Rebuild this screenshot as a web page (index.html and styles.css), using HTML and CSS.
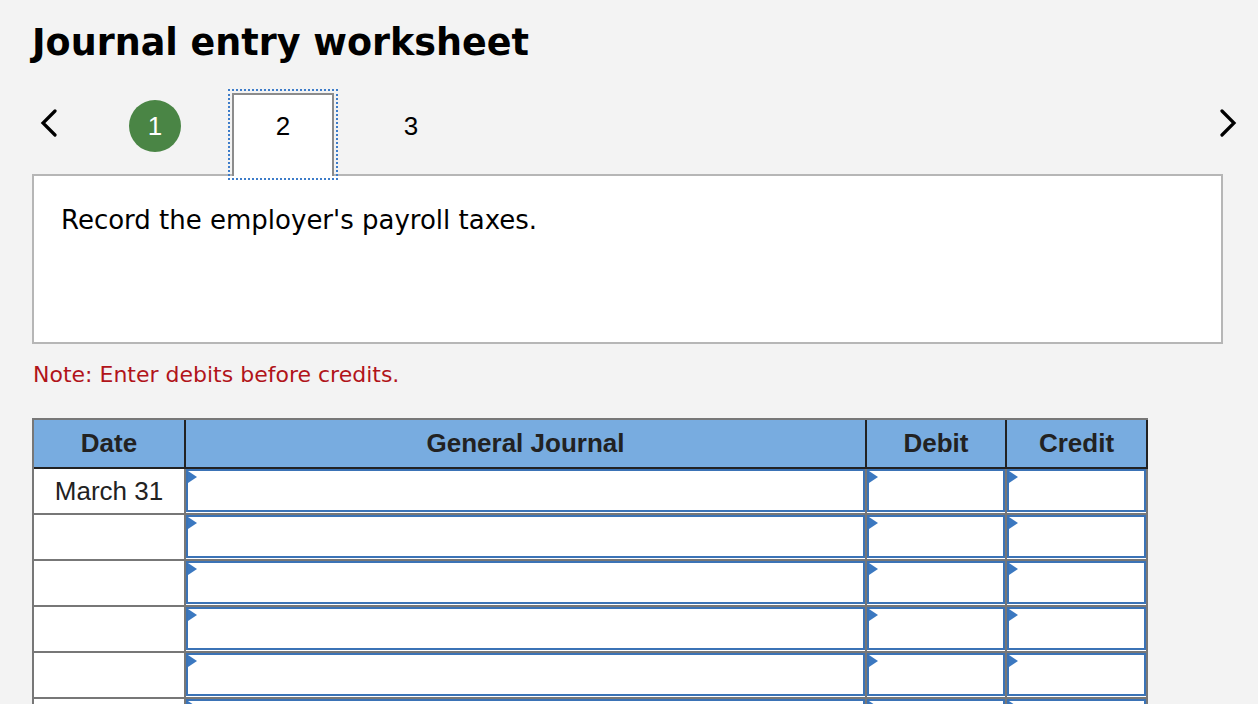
FILE: index.html
```html
<!DOCTYPE html>
<html lang="en">
<head>
<meta charset="utf-8">
<title>Journal entry worksheet</title>
<link rel="stylesheet" href="styles.css">
</head>
<body>
<div class="page">
  <h1 class="title">Journal entry worksheet</h1>

  <nav class="nav">
    <button class="chev chev-prev" aria-label="Previous">
      <svg width="18" height="28" viewBox="0 0 18 28"><polyline points="15,2 3,14 15,26" fill="none" stroke="#000" stroke-width="3.2" stroke-linecap="round" stroke-linejoin="miter"/></svg>
    </button>
    <div class="steps">
      <div class="step step-done"><span class="dot">1</span></div>
      <div class="step step-current"><span>2</span></div>
      <div class="step"><span>3</span></div>
    </div>
    <button class="chev chev-next" aria-label="Next">
      <svg width="18" height="28" viewBox="0 0 18 28"><polyline points="3,2 15,14 3,26" fill="none" stroke="#000" stroke-width="3.2" stroke-linecap="round" stroke-linejoin="miter"/></svg>
    </button>
  </nav>

  <div class="prompt">Record the employer's payroll taxes.</div>

  <p class="note">Note: Enter debits before credits.</p>

  <table class="journal">
    <thead>
      <tr class="head">
        <th class="c-date">Date</th>
        <th class="c-gj">General Journal</th>
        <th class="c-amt">Debit</th>
        <th class="c-cr">Credit</th>
      </tr>
    </thead>
    <tbody>
      <tr>
        <td class="date">March 31</td>
        <td class="entry"><div class="field"><input type="text"></div></td>
        <td class="entry"><div class="field"><input type="text"></div></td>
        <td class="entry"><div class="field"><input type="text"></div></td>
      </tr>
      <tr>
        <td class="date"></td>
        <td class="entry"><div class="field"><input type="text"></div></td>
        <td class="entry"><div class="field"><input type="text"></div></td>
        <td class="entry"><div class="field"><input type="text"></div></td>
      </tr>
      <tr>
        <td class="date"></td>
        <td class="entry"><div class="field"><input type="text"></div></td>
        <td class="entry"><div class="field"><input type="text"></div></td>
        <td class="entry"><div class="field"><input type="text"></div></td>
      </tr>
      <tr>
        <td class="date"></td>
        <td class="entry"><div class="field"><input type="text"></div></td>
        <td class="entry"><div class="field"><input type="text"></div></td>
        <td class="entry"><div class="field"><input type="text"></div></td>
      </tr>
      <tr>
        <td class="date"></td>
        <td class="entry"><div class="field"><input type="text"></div></td>
        <td class="entry"><div class="field"><input type="text"></div></td>
        <td class="entry"><div class="field"><input type="text"></div></td>
      </tr>
      <tr>
        <td class="date"></td>
        <td class="entry"><div class="field"><input type="text"></div></td>
        <td class="entry"><div class="field"><input type="text"></div></td>
        <td class="entry"><div class="field"><input type="text"></div></td>
      </tr>
      <tr>
        <td class="date"></td>
        <td class="entry"><div class="field"><input type="text"></div></td>
        <td class="entry"><div class="field"><input type="text"></div></td>
        <td class="entry"><div class="field"><input type="text"></div></td>
      </tr>
    </tbody>
  </table>
</div>
</body>
</html>
```
FILE: styles.css
```css
html, body {
  margin: 0;
  padding: 0;
}
body {
  background: #f3f3f3;
  font-family: "DejaVu Sans", Verdana, sans-serif;
  color: #000;
}
.page {
  padding-left: 32px;
}
.title {
  margin: 23px 0 0;
  font-size: 36.5px;
  line-height: 40px;
  font-weight: bold;
  color: #000;
}

/* navigation */
.nav {
  display: flex;
  align-items: flex-start;
  height: 82px;
  margin-top: 30px;
  margin-right: 21px;
}
.chev {
  background: none;
  border: 0;
  padding: 0;
  margin: 0;
  cursor: pointer;
}
.chev svg {
  display: block;
}
.chev-prev {
  width: 72px;
  text-align: left;
}
.chev-prev svg {
  margin: 16px 0 0 8px;
}
.chev-next {
  margin-left: auto;
}
.chev-next svg {
  margin-top: 16px;
}
.steps {
  display: flex;
  gap: 26px;
}
.step {
  width: 102px;
  height: 82px;
  box-sizing: border-box;
  display: flex;
  justify-content: center;
  align-items: flex-start;
  padding-top: 7px;
  font-family: "Liberation Sans", Arial, sans-serif;
  font-size: 26px;
  line-height: 52px;
  color: #000;
}
.dot {
  display: block;
  width: 52px;
  height: 52px;
  border-radius: 50%;
  background: #4a8545;
  color: #fff;
  text-align: center;
}
.step-current {
  position: relative;
  z-index: 1;
  height: 83px;
  padding-top: 5px;
  background: #fff;
  border: 2px solid #8c8c8c;
  border-bottom: 0;
}
.step-current::after {
  content: "";
  position: absolute;
  top: -6px;
  left: -6px;
  right: -6px;
  bottom: -4px;
  border: 2px dotted #3d7cc9;
  pointer-events: none;
}

/* prompt */
.prompt {
  margin-top: -1px;
  width: 1191px;
  height: 170px;
  box-sizing: border-box;
  border: 2px solid #b6b6b6;
  background: #fff;
  padding: 29px 27px;
  font-size: 26px;
  line-height: 30px;
}
.note {
  margin: 18px 0 0;
  padding-left: 1px;
  font-size: 22px;
  line-height: 26px;
  color: #b1141a;
}

/* journal table */
.journal {
  margin-top: 30px;
  width: 1116px;
  table-layout: fixed;
  border-collapse: separate;
  border-spacing: 0;
  border-top: 2px solid #777;
  border-left: 2px solid #777;
  font-family: "Liberation Sans", Arial, sans-serif;
}
.journal .head {
  height: 49px;
}
.journal th {
  padding: 0;
  box-sizing: border-box;
  background: #78ace0;
  border-right: 2px solid #222;
  border-bottom: 2px solid #222;
  font-size: 26px;
  font-weight: bold;
  color: #222;
  text-align: center;
  vertical-align: middle;
}
.c-date { width: 152px; }
.c-gj { width: 681px; }
.c-amt { width: 140px; }
.c-cr { width: 141px; }
.journal td {
  padding: 0;
  background: #fff;
  border-right: 2px solid #777;
  border-bottom: 2px solid #777;
}
.journal td.date {
  height: 44px;
  text-align: center;
  vertical-align: middle;
  font-size: 26px;
  color: #222;
}
.journal td.entry {
  padding-bottom: 1px;
  vertical-align: top;
}
.field {
  position: relative;
  height: 43px;
  box-sizing: border-box;
  border: 2px solid #3b73b6;
  background: #fff;
}
.field::before {
  content: "";
  position: absolute;
  left: 0;
  top: 0;
  width: 0;
  height: 0;
  border-left: 9px solid #3b78c0;
  border-top: 6.5px solid transparent;
  border-bottom: 6.5px solid transparent;
}
.field input {
  display: block;
  width: 100%;
  height: 100%;
  box-sizing: border-box;
  border: 0;
  margin: 0;
  padding: 0 6px;
  background: transparent;
  font-family: "Liberation Sans", Arial, sans-serif;
  font-size: 20px;
  outline: none;
}
```
